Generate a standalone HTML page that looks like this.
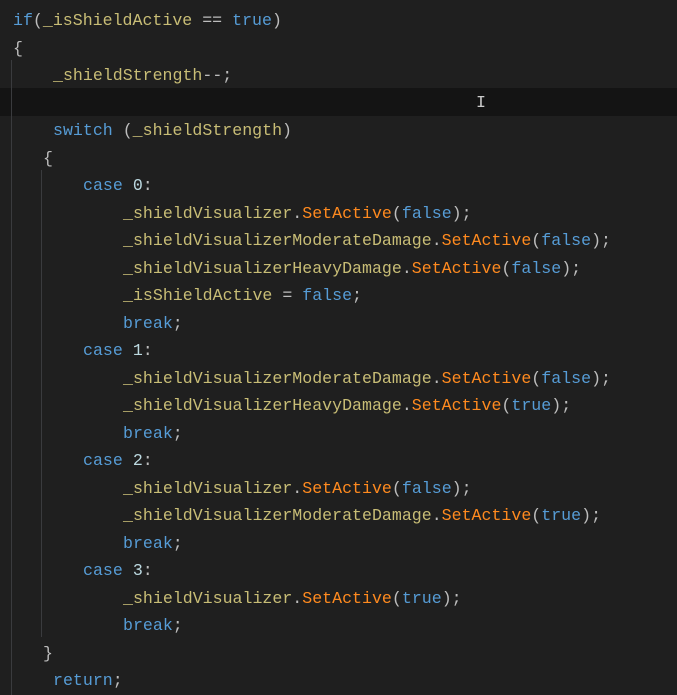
<!DOCTYPE html>
<html><head><style>
body{margin:0;background:#1f1f1f;width:677px;height:695px;overflow:hidden;position:relative;font-family:"Liberation Mono",monospace;font-size:16.6px;color:#bcbec4}
.l{position:absolute;height:27.5px;line-height:27.5px;white-space:pre}
.k{color:#569cd6}.f{color:#c8bd76}.m{color:#ff8a1f}.p{color:#bdbdbd}.n{color:#bcd9e0}
.hl{position:absolute;left:0;top:88px;width:677px;height:28px;background:#141414}
.g{position:absolute;width:1px;background:#3a3b3e}
</style></head><body>
<div class="hl"></div>
<div class="g" style="left:11px;top:60px;height:635px"></div>
<div class="g" style="left:41px;top:170px;height:467px"></div>
<div class="l" style="left:13px;top:7px"><span class="k">if</span><span class="p">(</span><span class="f">_isShieldActive</span><span class="p"> == </span><span class="k">true</span><span class="p">)</span></div>
<div class="l p" style="left:13px;top:34.5px">{</div>
<div class="l" style="left:53px;top:62px"><span class="f">_shieldStrength</span><span class="p">--;</span></div>
<div class="l" style="left:476px;top:89px;color:#ccc">I</div>
<div class="l" style="left:53px;top:117px"><span class="k">switch</span><span class="p"> (</span><span class="f">_shieldStrength</span><span class="p">)</span></div>
<div class="l p" style="left:43px;top:144.5px">{</div>
<div class="l" style="left:83px;top:172px"><span class="k">case</span> <span class="n">0</span><span class="p">:</span></div>
<div class="l" style="left:123px;top:199.5px"><span class="f">_shieldVisualizer</span><span class="p">.</span><span class="m">SetActive</span><span class="p">(</span><span class="k">false</span><span class="p">);</span></div>
<div class="l" style="left:123px;top:227px"><span class="f">_shieldVisualizerModerateDamage</span><span class="p">.</span><span class="m">SetActive</span><span class="p">(</span><span class="k">false</span><span class="p">);</span></div>
<div class="l" style="left:123px;top:254.5px"><span class="f">_shieldVisualizerHeavyDamage</span><span class="p">.</span><span class="m">SetActive</span><span class="p">(</span><span class="k">false</span><span class="p">);</span></div>
<div class="l" style="left:123px;top:282px"><span class="f">_isShieldActive</span><span class="p"> = </span><span class="k">false</span><span class="p">;</span></div>
<div class="l" style="left:123px;top:309.5px"><span class="k">break</span><span class="p">;</span></div>
<div class="l" style="left:83px;top:337px"><span class="k">case</span> <span class="n">1</span><span class="p">:</span></div>
<div class="l" style="left:123px;top:364.5px"><span class="f">_shieldVisualizerModerateDamage</span><span class="p">.</span><span class="m">SetActive</span><span class="p">(</span><span class="k">false</span><span class="p">);</span></div>
<div class="l" style="left:123px;top:392px"><span class="f">_shieldVisualizerHeavyDamage</span><span class="p">.</span><span class="m">SetActive</span><span class="p">(</span><span class="k">true</span><span class="p">);</span></div>
<div class="l" style="left:123px;top:419.5px"><span class="k">break</span><span class="p">;</span></div>
<div class="l" style="left:83px;top:447px"><span class="k">case</span> <span class="n">2</span><span class="p">:</span></div>
<div class="l" style="left:123px;top:474.5px"><span class="f">_shieldVisualizer</span><span class="p">.</span><span class="m">SetActive</span><span class="p">(</span><span class="k">false</span><span class="p">);</span></div>
<div class="l" style="left:123px;top:502px"><span class="f">_shieldVisualizerModerateDamage</span><span class="p">.</span><span class="m">SetActive</span><span class="p">(</span><span class="k">true</span><span class="p">);</span></div>
<div class="l" style="left:123px;top:529.5px"><span class="k">break</span><span class="p">;</span></div>
<div class="l" style="left:83px;top:557px"><span class="k">case</span> <span class="n">3</span><span class="p">:</span></div>
<div class="l" style="left:123px;top:584.5px"><span class="f">_shieldVisualizer</span><span class="p">.</span><span class="m">SetActive</span><span class="p">(</span><span class="k">true</span><span class="p">);</span></div>
<div class="l" style="left:123px;top:612px"><span class="k">break</span><span class="p">;</span></div>
<div class="l p" style="left:43px;top:639.5px">}</div>
<div class="l" style="left:53px;top:667px"><span class="k">return</span><span class="p">;</span></div>
</body></html>
